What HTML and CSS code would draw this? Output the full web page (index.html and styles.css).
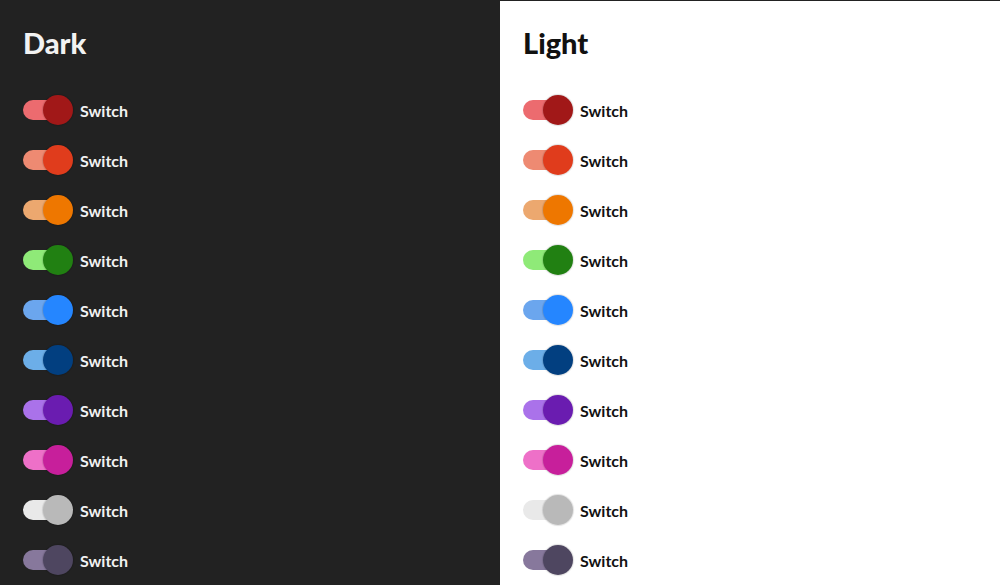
FILE: index.html
```html
<!DOCTYPE html>
<html lang="en">

<head>
    <meta charset="UTF-8">
    <meta name="viewport" content="width=device-width, initial-scale=1.0">
    <title>Switches</title>
    <link rel="stylesheet" href="styles.css">
</head>

<body>
    <section class="panel dark">
        <h2>Dark</h2>
        <ul class="list">
            <li class="switch red"><span class="track"></span><span class="thumb"></span><span class="label">Switch</span></li>
            <li class="switch vermilion"><span class="track"></span><span class="thumb"></span><span class="label">Switch</span></li>
            <li class="switch orange"><span class="track"></span><span class="thumb"></span><span class="label">Switch</span></li>
            <li class="switch green"><span class="track"></span><span class="thumb"></span><span class="label">Switch</span></li>
            <li class="switch blue"><span class="track"></span><span class="thumb"></span><span class="label">Switch</span></li>
            <li class="switch navy"><span class="track"></span><span class="thumb"></span><span class="label">Switch</span></li>
            <li class="switch purple"><span class="track"></span><span class="thumb"></span><span class="label">Switch</span></li>
            <li class="switch pink"><span class="track"></span><span class="thumb"></span><span class="label">Switch</span></li>
            <li class="switch grey"><span class="track"></span><span class="thumb"></span><span class="label">Switch</span></li>
            <li class="switch slate"><span class="track"></span><span class="thumb"></span><span class="label">Switch</span></li>
        </ul>
    </section>
    <section class="panel light">
        <h2>Light</h2>
        <ul class="list">
            <li class="switch red"><span class="track"></span><span class="thumb"></span><span class="label">Switch</span></li>
            <li class="switch vermilion"><span class="track"></span><span class="thumb"></span><span class="label">Switch</span></li>
            <li class="switch orange"><span class="track"></span><span class="thumb"></span><span class="label">Switch</span></li>
            <li class="switch green"><span class="track"></span><span class="thumb"></span><span class="label">Switch</span></li>
            <li class="switch blue"><span class="track"></span><span class="thumb"></span><span class="label">Switch</span></li>
            <li class="switch navy"><span class="track"></span><span class="thumb"></span><span class="label">Switch</span></li>
            <li class="switch purple"><span class="track"></span><span class="thumb"></span><span class="label">Switch</span></li>
            <li class="switch pink"><span class="track"></span><span class="thumb"></span><span class="label">Switch</span></li>
            <li class="switch grey"><span class="track"></span><span class="thumb"></span><span class="label">Switch</span></li>
            <li class="switch slate"><span class="track"></span><span class="thumb"></span><span class="label">Switch</span></li>
        </ul>
    </section>
</body>

</html>
```

FILE: styles.css
```css
html,
body {
    margin: 0;
    height: 585px;
    overflow: hidden;
}

body {
    display: grid;
    grid-template-columns: 500px 500px;
    background: #222;
    font-family: Lato, "Noto Sans", sans-serif;
}

.panel {
    padding: 23px 23px 0;
}

.dark {
    background: #222;
    color: #f2f2f2;
}

.light {
    background: #fff;
    color: #111;
    box-shadow: inset 0 1px 0 #222;
}

h2 {
    margin: 0;
    height: 40px;
    font-size: 29px;
    line-height: 40px;
    font-weight: 900;
}

.list {
    list-style: none;
    margin: 32px 0 0;
    padding: 0;
    display: flex;
    flex-direction: column;
    gap: 20px;
}

.switch {
    display: flex;
    align-items: center;
    height: 30px;
}

.track {
    width: 40px;
    height: 20px;
    border-radius: 10px;
    background: var(--track);
}

.thumb {
    width: 30px;
    height: 30px;
    margin-left: -20px;
    border-radius: 50%;
    background: var(--thumb);
    box-shadow: 0 0 1px 1px rgba(0, 0, 0, 0.12);
}

.label {
    margin-left: 7px;
    font-size: 16px;
    font-weight: 700;
}

.red { --track: #ec6b6f; --thumb: #a11818; }
.vermilion { --track: #ee8a72; --thumb: #e03c1c; }
.orange { --track: #eca86f; --thumb: #ee7700; }
.green { --track: #8fea78; --thumb: #218012; }
.blue { --track: #6ba6ee; --thumb: #2586ff; }
.navy { --track: #6caee8; --thumb: #023f80; }
.purple { --track: #aa72ea; --thumb: #6a1cb0; }
.pink { --track: #ee70c8; --thumb: #c71f9b; }
.grey { --track: #e9e9e9; --thumb: #b9b9b9; }
.slate { --track: #87789c; --thumb: #4e4660; }
```
